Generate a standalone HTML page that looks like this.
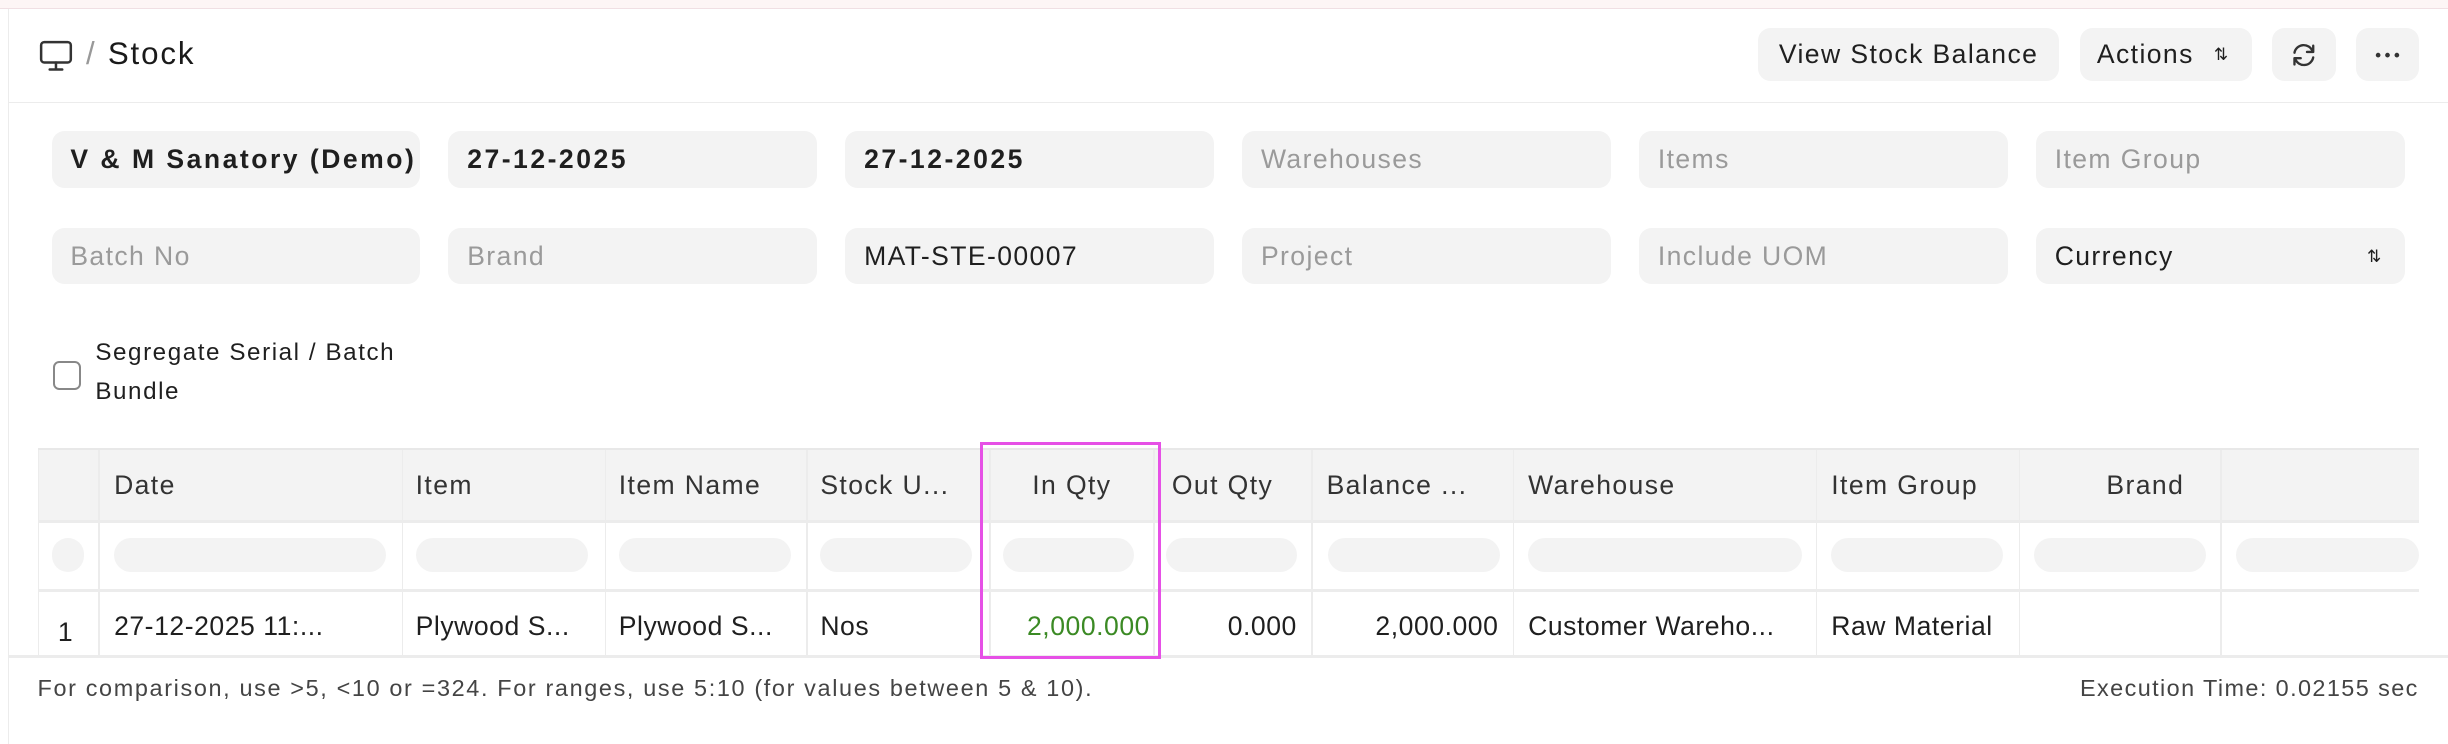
<!DOCTYPE html>
<html><head><meta charset="utf-8">
<style>
html,body{margin:0;padding:0;background:#fff;overflow:hidden;width:2448px;height:744px}
#root{zoom:1.5625;position:relative;width:1568px;height:477px;font-family:"Liberation Sans",sans-serif;color:#1f1f1f;letter-spacing:0.9px}
.abs{position:absolute;white-space:nowrap}
.btn{position:absolute;top:18px;height:34px;background:#f3f3f3;border-radius:8px;font-size:17px;line-height:34px;color:#1f1f1f;box-sizing:border-box}
.f{position:absolute;width:236px;height:36px;background:#f3f3f3;border-radius:8px;font-size:17px;line-height:36px;padding-left:12px;box-sizing:border-box;color:#1f1f1f;white-space:nowrap}
.b{font-weight:bold;letter-spacing:1.6px}
.ph{color:#9a9a9a}
.vl{position:absolute;top:288px;height:132px;width:1px;background:#ececec}
.th{position:absolute;top:288px;height:45px;line-height:45px;font-size:17px;color:#333;white-space:nowrap}
.pill{position:absolute;top:344px;height:22px;background:#f3f3f3;border-radius:11px}
.td{position:absolute;top:380px;height:40px;line-height:42px;font-size:17px;color:#1f1f1f;white-space:nowrap;letter-spacing:0.35px}
</style></head><body><div id="root">
<div class="abs" style="left:0;top:0;width:1568px;height:5px;background:#fdf5f5"></div>
<div class="abs" style="left:0;top:5px;width:1568px;height:1px;background:#f0dfe3"></div>
<div class="abs" style="left:5px;top:6px;width:1px;height:471px;background:#ececec"></div>
<svg class="abs" style="left:24px;top:25px" width="24" height="22" viewBox="0 0 24 22" fill="none" stroke="#333" stroke-width="1.6" stroke-linecap="round"><rect x="2" y="2" width="19" height="13" rx="2"/><path d="M11.5 15v4M7.5 19.5h8"/></svg>
<div class="abs" style="left:55px;top:23px;font-size:20px;color:#999">/</div>
<div class="abs" style="left:69px;top:23px;font-size:20px;color:#1a1a1a;letter-spacing:1.2px">Stock</div>
<div class="btn" style="left:1125px;width:193px;text-align:center">View Stock Balance</div>
<div class="btn" style="left:1331px;width:110px;padding-left:11px">Actions<span style="position:absolute;right:14px;top:0;font-size:11px;line-height:34px">&#8645;</span></div>
<div class="btn" style="left:1454px;width:41px"><svg style="position:absolute;left:11px;top:8px" width="19" height="18" viewBox="0 0 19 18" fill="none" stroke="#333" stroke-width="1.5" stroke-linecap="round" stroke-linejoin="round"><path d="M3.5 7.5A6 6 0 0 1 15 6.5"/><path d="M15.5 3v4h-4"/><path d="M15.5 10.5A6 6 0 0 1 4 11.5"/><path d="M3.5 15v-4h4"/></svg></div>
<div class="btn" style="left:1508px;width:40px"><svg style="position:absolute;left:12px;top:15px" width="16" height="4" viewBox="0 0 16 4" fill="#333"><circle cx="2" cy="2" r="1.5"/><circle cx="8" cy="2" r="1.5"/><circle cx="14" cy="2" r="1.5"/></svg></div>
<div class="abs" style="left:6px;top:65px;width:1562px;height:1px;background:#ececec"></div>

<div class="f b" style="left:33px;top:84px">V &amp; M Sanatory (Demo)</div>
<div class="f b" style="left:287px;top:84px">27-12-2025</div>
<div class="f b" style="left:541px;top:84px">27-12-2025</div>
<div class="f ph" style="left:795px;top:84px">Warehouses</div>
<div class="f ph" style="left:1049px;top:84px">Items</div>
<div class="f ph" style="left:1303px;top:84px">Item Group</div>
<div class="f ph" style="left:33px;top:146px">Batch No</div>
<div class="f ph" style="left:287px;top:146px">Brand</div>
<div class="f" style="left:541px;top:146px">MAT-STE-00007</div>
<div class="f ph" style="left:795px;top:146px">Project</div>
<div class="f ph" style="left:1049px;top:146px">Include UOM</div>
<div class="f" style="left:1303px;top:146px">Currency<span style="position:absolute;right:14px;font-size:11px">&#8645;</span></div>

<div class="abs" style="left:34px;top:231px;width:15px;height:16px;border:1.3px solid #888;border-radius:4px"></div>
<div class="abs" style="left:61px;top:213px;font-size:15.5px;line-height:25px;color:#1f1f1f;letter-spacing:1.0px">Segregate Serial / Batch<br>Bundle</div>

<div class="abs" style="left:24px;top:288px;width:1524px;height:45px;background:#f3f3f3"></div>
<div class="abs" style="left:24px;top:287px;width:1524px;height:1px;background:#e8e8e8"></div>
<div class="abs" style="left:24px;top:333px;width:1524px;height:2px;background:#ececec"></div>
<div class="abs" style="left:24px;top:377px;width:1524px;height:2px;background:#ececec"></div>
<div class="abs" style="left:6px;top:419px;width:1562px;height:2px;background:#ececec"></div>
<div class="vl" style="left:24px"></div><div class="vl" style="left:63px"></div><div class="vl" style="left:257px"></div><div class="vl" style="left:387px"></div><div class="vl" style="left:516px"></div><div class="vl" style="left:633px"></div><div class="vl" style="left:738px"></div><div class="vl" style="left:839px"></div><div class="vl" style="left:968px"></div><div class="vl" style="left:1162px"></div><div class="vl" style="left:1292px"></div><div class="vl" style="left:1421px"></div>

<div class="th" style="left:73px">Date</div>
<div class="th" style="left:266px">Item</div>
<div class="th" style="left:396px">Item Name</div>
<div class="th" style="left:525px">Stock U...</div>
<div class="th" style="left:634px;width:104px;text-align:center">In Qty</div>
<div class="th" style="left:750px">Out Qty</div>
<div class="th" style="left:849px">Balance ...</div>
<div class="th" style="left:978px">Warehouse</div>
<div class="th" style="left:1172px">Item Group</div>
<div class="th" style="left:1293px;width:160px;text-align:center">Brand</div>

<div class="pill" style="left:33px;width:21px"></div>
<div class="pill" style="left:73px;width:174px"></div>
<div class="pill" style="left:266px;width:110px"></div>
<div class="pill" style="left:396px;width:110px"></div>
<div class="pill" style="left:525px;width:97px"></div>
<div class="pill" style="left:642px;width:84px"></div>
<div class="pill" style="left:746px;width:84px"></div>
<div class="pill" style="left:850px;width:110px"></div>
<div class="pill" style="left:978px;width:175px"></div>
<div class="pill" style="left:1172px;width:110px"></div>
<div class="pill" style="left:1302px;width:110px"></div>
<div class="pill" style="left:1431px;width:117px"></div>

<div class="td" style="left:37px;top:384px">1</div>
<div class="td" style="left:73px">27-12-2025 11:...</div>
<div class="td" style="left:266px">Plywood S...</div>
<div class="td" style="left:396px">Plywood S...</div>
<div class="td" style="left:525px">Nos</div>
<div class="td" style="left:634px;width:102px;text-align:right;color:#3b8a24;overflow:hidden">2,000.000</div>
<div class="td" style="left:740px;width:90px;text-align:right">0.000</div>
<div class="td" style="left:840px;width:119px;text-align:right">2,000.000</div>
<div class="td" style="left:978px">Customer Wareho...</div>
<div class="td" style="left:1172px">Raw Material</div>

<div class="abs" style="left:627px;top:283px;width:112px;height:135px;border:2px solid #e650e6"></div>

<div class="abs" style="left:24px;top:432px;font-size:15px;color:#444;letter-spacing:1.05px">For comparison, use &gt;5, &lt;10 or =324. For ranges, use 5:10 (for values between 5 &amp; 10).</div>
<div class="abs" style="right:20px;top:432px;font-size:15px;color:#444;letter-spacing:0.9px">Execution Time: 0.02155 sec</div>
</div></body></html>
